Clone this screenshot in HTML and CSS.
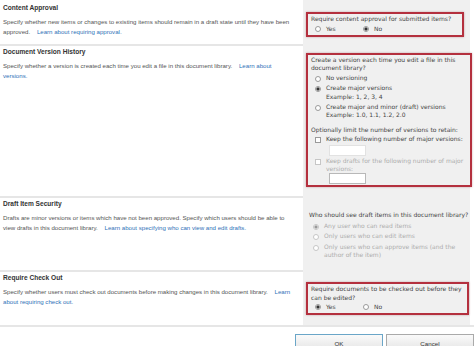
FILE: index.html
```html
<!DOCTYPE html>
<html lang="en">
<head>
    <meta charset="UTF-8">
    <title>Library Versioning Settings</title>
    <link rel="stylesheet" href="styles.css">
</head>
<body>
    <div class="settings">
        <div class="section sec-approval">
            <div class="info">
                <h3>Content Approval</h3>
                <p>Specify whether new items or changes to existing items should remain in a draft state until they have been approved. &nbsp;&nbsp; <a href="#">Learn about requiring approval.</a></p>
            </div>
            <div class="ctrl">
                <div class="mark mark-approval">
                    <div>Require content approval for submitted items?</div>
                    <div class="inline-opts">
                        <span class="opt"><span class="radio"></span>Yes</span>
                        <span class="opt"><span class="radio on"></span>No</span>
                    </div>
                </div>
            </div>
        </div>

        <div class="section sec-versions">
            <div class="info">
                <h3>Document Version History</h3>
                <p>Specify whether a version is created each time you edit a file in this document library. &nbsp;&nbsp; <a href="#">Learn about versions.</a></p>
            </div>
            <div class="ctrl">
                <div class="mark mark-versions">
                    <div>Create a version each time you edit a file in this document library?</div>
                    <div class="opt-row first"><span class="radio"></span><span>No versioning</span></div>
                    <div class="opt-row"><span class="radio on"></span><span>Create major versions<br>Example: 1, 2, 3, 4</span></div>
                    <div class="opt-row"><span class="radio"></span><span>Create major and minor (draft) versions<br>Example: 1.0, 1.1, 1.2, 2.0</span></div>
                    <div class="limit">Optionally limit the number of versions to retain:</div>
                    <div class="opt-row first"><span class="check"></span><span>Keep the following number of major versions:</span></div>
                    <div class="num disabled-input"></div>
                    <div class="opt-row first muted"><span class="check"></span><span>Keep drafts for the following number of major versions:</span></div>
                    <div class="num last"></div>
                </div>
            </div>
        </div>

        <div class="section sec-drafts">
            <div class="info">
                <h3>Draft Item Security</h3>
                <p>Drafts are minor versions or items which have not been approved. Specify which users should be able to view drafts in this document library. &nbsp;&nbsp; <a href="#">Learn about specifying who can view and edit drafts.</a></p>
            </div>
            <div class="ctrl">
                <div class="plain">
                    <div class="question">Who should see draft items in this document library?</div>
                    <div class="muted">
                        <div class="opt-row"><span class="radio on"></span><span>Any user who can read items</span></div>
                        <div class="opt-row"><span class="radio"></span><span>Only users who can edit items</span></div>
                        <div class="opt-row"><span class="radio"></span><span>Only users who can approve items (and the author of the item)</span></div>
                    </div>
                </div>
            </div>
        </div>

        <div class="section sec-checkout">
            <div class="info">
                <h3>Require Check Out</h3>
                <p>Specify whether users must check out documents before making changes in this document library. &nbsp;&nbsp; <a href="#">Learn about requiring check out.</a></p>
            </div>
            <div class="ctrl">
                <div class="mark mark-checkout">
                    <div>Require documents to be checked out before they can be edited?</div>
                    <div class="inline-opts">
                        <span class="opt"><span class="radio on"></span>Yes</span>
                        <span class="opt"><span class="radio"></span>No</span>
                    </div>
                </div>
            </div>
        </div>

        <div class="buttons">
            <button class="btn btn-ok">OK</button>
            <button class="btn">Cancel</button>
        </div>
    </div>
</body>
</html>
```

FILE: styles.css
```css
body {
    margin: 0;
    background: #fff;
    font-family: "Liberation Sans", Arial, sans-serif;
    color: #555;
    overflow: hidden;
}
.settings {
    width: 474px;
}
.section {
    display: grid;
    grid-template-columns: 303px 167px 4px;
}
.info {
    border-top: 2px solid #e6e6e6;
    padding: 0 8px 0 3px;
}
.sec-approval .info {
    border-top-color: transparent;
}
.info h3 {
    margin: 1px 0 5px;
    font-size: 6.6px;
    line-height: 9px;
    color: #333;
}
.info p {
    margin: 0;
    font-size: 6.1px;
    line-height: 9.5px;
}
.info a {
    color: #2f72b8;
    text-decoration: none;
}
.ctrl {
    background: #f0f0f0;
    font-family: "DejaVu Sans", Verdana, sans-serif;
    font-size: 6px;
    line-height: 8.6px;
    color: #444;
}
.sec-approval { height: 44px; }
.sec-versions { height: 152px; }
.sec-drafts { height: 74px; }
.sec-checkout { height: 55px; }

.mark {
    border: 2px solid #b4303e;
    box-shadow: 0 0 2px rgba(120, 20, 30, 0.35);
    margin-left: 3px;
    padding: 1px 3px;
}
.mark-approval {
    margin-top: 12px;
    width: 148px;
    padding-bottom: 2px;
}
.mark-versions {
    margin-top: 9px;
    width: 156px;
    height: 128px;
    line-height: 8.4px;
    padding-top: 1px;
}
.mark-checkout {
    margin-top: 12px;
    width: 153px;
    padding-bottom: 1px;
}
.plain {
    padding: 15px 0 0 6px;
    white-space: nowrap;
}
.plain .opt-row span:last-child {
    white-space: normal;
}
.inline-opts {
    display: flex;
    padding-left: 4px;
    margin-top: 1px;
}
.opt {
    display: flex;
    align-items: center;
    gap: 5px;
    width: 48px;
}
.opt-row {
    display: flex;
    align-items: flex-start;
    gap: 5px;
    padding-left: 4px;
    margin-top: 2px;
}
.opt-row.first {
    margin-top: 1px;
}
.radio {
    flex: none;
    width: 4px;
    height: 4px;
    border: 1px solid #9a9a9a;
    border-radius: 50%;
    background: #fff;
    margin-top: 2px;
}
.inline-opts .radio {
    margin-top: 0;
}
.radio.on {
    background: radial-gradient(circle, #333 0 1.4px, #fff 1.8px);
}
.check {
    flex: none;
    width: 4px;
    height: 4px;
    border: 1px solid #9a9a9a;
    background: #fff;
    margin-top: 2px;
}
.limit {
    margin-top: 6px;
}
.num {
    width: 35px;
    height: 9px;
    border: 1px solid #b8b8b8;
    background: #fff;
    margin: 1px 0 0 18px;
}
.num.last {
    margin-top: 0;
}
.disabled-input {
    border-color: #e2e2e2;
}
.muted {
    color: #adadad;
}
.question {
    margin-bottom: 1px;
}
.muted .radio, .muted .check {
    border-color: #c6c6c6;
}
.muted .radio.on {
    background: radial-gradient(circle, #999 0 1.4px, #fff 1.8px);
}
.buttons {
    border-top: 2px solid #e6e6e6;
    display: flex;
    justify-content: flex-end;
    gap: 3px;
    padding-top: 7px;
}
.btn {
    width: 88px;
    height: 18px;
    font-family: "Liberation Sans", Arial, sans-serif;
    font-size: 6.2px;
    color: #333;
    border: 1px solid #aaa;
    background: linear-gradient(#fafafa, #e4e4e4);
    padding: 0;
}
.btn-ok {
    border-color: #6aa6c8;
}
```
